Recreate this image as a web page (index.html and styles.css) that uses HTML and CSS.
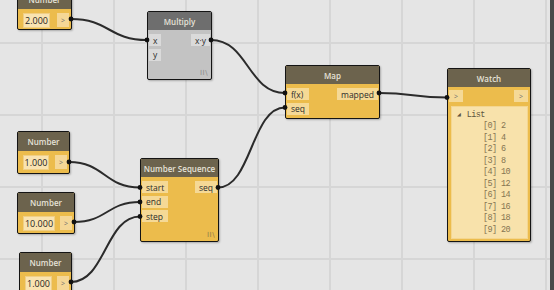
FILE: index.html
```html
<!DOCTYPE html>
<html lang="en">
<head>
  <meta charset="UTF-8">
  <meta name="viewport" content="width=device-width, initial-scale=1.0">
  <title>Graph</title>
  <link rel="stylesheet" href="styles.css">
</head>
<body>

  <main class="canvas">

    <!-- === Number inputs === -->
    <div class="node node-num n-num-a">
      <div class="node-head">Number</div>
      <div class="node-body num-body">
        <span class="num-field">2.000</span>
        <span class="num-btn">&gt;</span>
      </div>
    </div>
    <div class="node node-num n-num-b">
      <div class="node-head">Number</div>
      <div class="node-body num-body">
        <span class="num-field">1.000</span>
        <span class="num-btn">&gt;</span>
      </div>
    </div>
    <div class="node node-num n-num-c">
      <div class="node-head">Number</div>
      <div class="node-body num-body">
        <span class="num-field">10.000</span>
        <span class="num-btn">&gt;</span>
      </div>
    </div>
    <div class="node node-num n-num-d">
      <div class="node-head">Number</div>
      <div class="node-body num-body">
        <span class="num-field">1.000</span>
        <span class="num-btn">&gt;</span>
      </div>
    </div>

    <!-- === Functions === -->
    <div class="node node-gray n-mul">
      <div class="node-head">Multiply</div>
      <div class="node-body">
        <div class="ports">
          <div class="ports-in"><span class="port">x</span><span class="port">y</span></div>
          <div class="ports-out"><span class="port">x·y</span></div>
        </div>
        <span class="lacing">II\</span>
      </div>
    </div>

    <div class="node n-map">
      <div class="node-head">Map</div>
      <div class="node-body">
        <div class="ports">
          <div class="ports-in"><span class="port">f(x)</span><span class="port">seq</span></div>
          <div class="ports-out"><span class="port">mapped</span></div>
        </div>
      </div>
    </div>

    <div class="node n-seq">
      <div class="node-head">Number Sequence</div>
      <div class="node-body">
        <div class="ports">
          <div class="ports-in"><span class="port">start</span><span class="port">end</span><span class="port">step</span></div>
          <div class="ports-out"><span class="port">seq</span></div>
        </div>
        <span class="lacing">II\</span>
      </div>
    </div>

    <!-- === Watch === -->
    <div class="node n-watch">
      <div class="node-head">Watch</div>
      <div class="node-body watch-body">
        <div class="ports">
          <span class="port port-arrow">&gt;</span>
          <span class="port port-arrow">&gt;</span>
        </div>
        <div class="watch-list">
          <div class="watch-root"><span class="tree-tri">◢</span>List</div>
          <div class="watch-item">[0] 2</div>
          <div class="watch-item">[1] 4</div>
          <div class="watch-item">[2] 6</div>
          <div class="watch-item">[3] 8</div>
          <div class="watch-item">[4] 10</div>
          <div class="watch-item">[5] 12</div>
          <div class="watch-item">[6] 14</div>
          <div class="watch-item">[7] 16</div>
          <div class="watch-item">[8] 18</div>
          <div class="watch-item">[9] 20</div>
        </div>
      </div>
    </div>

    <!-- === Wires === -->
    <svg class="wires" viewBox="0 0 554 290" aria-hidden="true">
      <g class="wire">
        <path d="M71 19 C109 19 109 40 147 40"/>
        <path d="M211 40 C248 40 248 93 285 93"/>
        <path d="M218 187.5 C251.5 187.5 251.5 107.5 285 107.5"/>
        <path d="M379 93 C413 93 413 97.5 447 97.5"/>
        <path d="M69 162 C104.5 162 104.5 187.5 140 187.5"/>
        <path d="M74 222 C107 222 107 202 140 202"/>
        <path d="M71 282 C105.5 282 105.5 216.5 140 216.5"/>
      </g>
      <g class="pin">
        <circle cx="71" cy="19" r="2.4"/><circle cx="147" cy="40" r="2.4"/>
        <circle cx="211" cy="40" r="2.4"/><circle cx="285" cy="93" r="2.4"/>
        <circle cx="218" cy="187.5" r="2.4"/><circle cx="285" cy="107.5" r="2.4"/>
        <circle cx="379" cy="93" r="2.4"/><circle cx="447" cy="97.5" r="2.4"/>
        <circle cx="69" cy="162" r="2.4"/><circle cx="140" cy="187.5" r="2.4"/>
        <circle cx="74" cy="222" r="2.4"/><circle cx="140" cy="202" r="2.4"/>
        <circle cx="71" cy="282" r="2.4"/><circle cx="140" cy="216.5" r="2.4"/>
      </g>
    </svg>
  </main>

</body>
</html>
```

FILE: styles.css
```css
/* === Reset === */
*, *::before, *::after { box-sizing: border-box; }
body {
  margin: 0;
  font-family: "Open Sans", "Noto Sans", sans-serif;
  overflow: hidden;
}

/* === Canvas === */
.canvas {
  --grid: #d6d6d6;

  background-color: #e5e5e5;
  background-image:
    linear-gradient(90deg, var(--grid) 2px, transparent 0),
    linear-gradient(var(--grid) 2px, transparent 0);
  background-position: 41px 42px;
  background-size: 72px 72px;
  border-right: 4px solid #4a4a4a;
  height: 290px;
  overflow: hidden;
  position: relative;
  width: 554px;
}

/* === Node === */
.node {
  --node-bg: #ecbc4c;
  --node-head: #6c634d;
  --port-bg: #f5d996;

  background: var(--node-bg);
  border: 1px solid #141414;
  border-radius: 2px;
  box-shadow: 1px 1px 2px rgba(0, 0, 0, .25);
  display: flex;
  flex-direction: column;
  overflow: hidden;
  position: absolute;
}
.node-head {
  align-items: center;
  background: var(--node-head);
  color: #e6e2d8;
  display: flex;
  flex: none;
  font-size: 8px;
  font-weight: 600;
  height: 18px;
  justify-content: center;
  white-space: nowrap;
}
.node-body {
  display: flex;
  flex: 1;
  flex-direction: column;
  padding: 4px 1px 2px;
}
.node-gray {
  --node-bg: #c3c3c3;
  --node-head: #6e6e6e;
  --port-bg: #dadada;
}

/* === Ports === */
.ports {
  display: flex;
  justify-content: space-between;
}
.ports-in, .ports-out {
  align-items: stretch;
  display: flex;
  flex-direction: column;
  gap: 2.5px;
}
.ports-out { align-items: flex-end; }
.port {
  align-items: center;
  background: var(--port-bg);
  color: #2c2c2c;
  display: flex;
  font-size: 8.5px;
  height: 12px;
  padding: 0 4px;
}
.lacing {
  align-self: flex-end;
  color: #8d7a4c;
  font-family: "DejaVu Sans", sans-serif;
  font-size: 7px;
  letter-spacing: .5px;
  margin-top: auto;
  padding-right: 2px;
}
.node-gray .lacing { color: #8a8a8a; }

/* === Number node === */
.node-num .node-head { height: 19px; }
.num-body {
  align-items: flex-start;
  flex-direction: row;
  justify-content: space-between;
  padding: 4px 2px 0 5px;
}
.num-field {
  align-items: center;
  background: #f9e3b1;
  border: 1px solid #f0cf85;
  color: #1e1e1e;
  display: flex;
  font-size: 9px;
  height: 15px;
  justify-content: center;
}
.num-btn {
  align-items: center;
  background: #f5d796;
  color: #6d6d6d;
  display: flex;
  font-size: 7px;
  height: 14px;
  justify-content: center;
  width: 12px;
}

/* === Watch === */
.watch-body { padding: 3px 2px 2px 1px; }
.port-arrow {
  color: #6d6d6d;
  font-size: 7px;
  height: 12px;
  justify-content: center;
  width: 14px;
}
.watch-list {
  background: #f8e2ab;
  border: 1px solid #f4d690;
  color: #857552;
  flex: 1;
  font-family: "Liberation Mono", "DejaVu Sans Mono", monospace;
  font-size: 8.5px;
  letter-spacing: -.6px;
  line-height: 11.45px;
  margin: 4px 0 0 2px;
  padding: 2px 0 0 5px;
}
.watch-root { color: #5f5440; }
.tree-tri {
  display: inline-block;
  font-family: "DejaVu Sans", sans-serif;
  font-size: 5px;
  letter-spacing: 0;
  margin-right: 6px;
  vertical-align: 1px;
}
.watch-item { padding-left: 26px; }

/* === Node positions on the canvas === */
.n-num-a { height: 41px; left: 17px; top: -11px; width: 55px; }
.n-num-a .num-field { width: 27px; }
.n-num-b { height: 43px; left: 17px; top: 131px; width: 53px; }
.n-num-b .num-field { width: 26px; }
.n-num-c { height: 42px; left: 17px; top: 192px; width: 58px; }
.n-num-c .num-field { width: 32px; }
.n-num-d { height: 44px; left: 19px; top: 252px; width: 53px; }
.n-num-d .num-field { width: 27px; }
.n-mul   { height: 69px; left: 147px; top: 11px; width: 65px; }
.n-map   { height: 54px; left: 285px; top: 65px; width: 95px; }
.n-seq   { height: 84px; left: 140px; top: 158px; width: 79px; }
.n-watch { height: 174px; left: 447px; top: 68px; width: 84px; }

/* === Wires === */
.wires {
  height: 290px;
  left: 0;
  pointer-events: none;
  position: absolute;
  top: 0;
  width: 554px;
}
.wire path {
  fill: none;
  stroke: #2b2b2b;
  stroke-width: 2;
}
.pin circle { fill: #111; }
```
